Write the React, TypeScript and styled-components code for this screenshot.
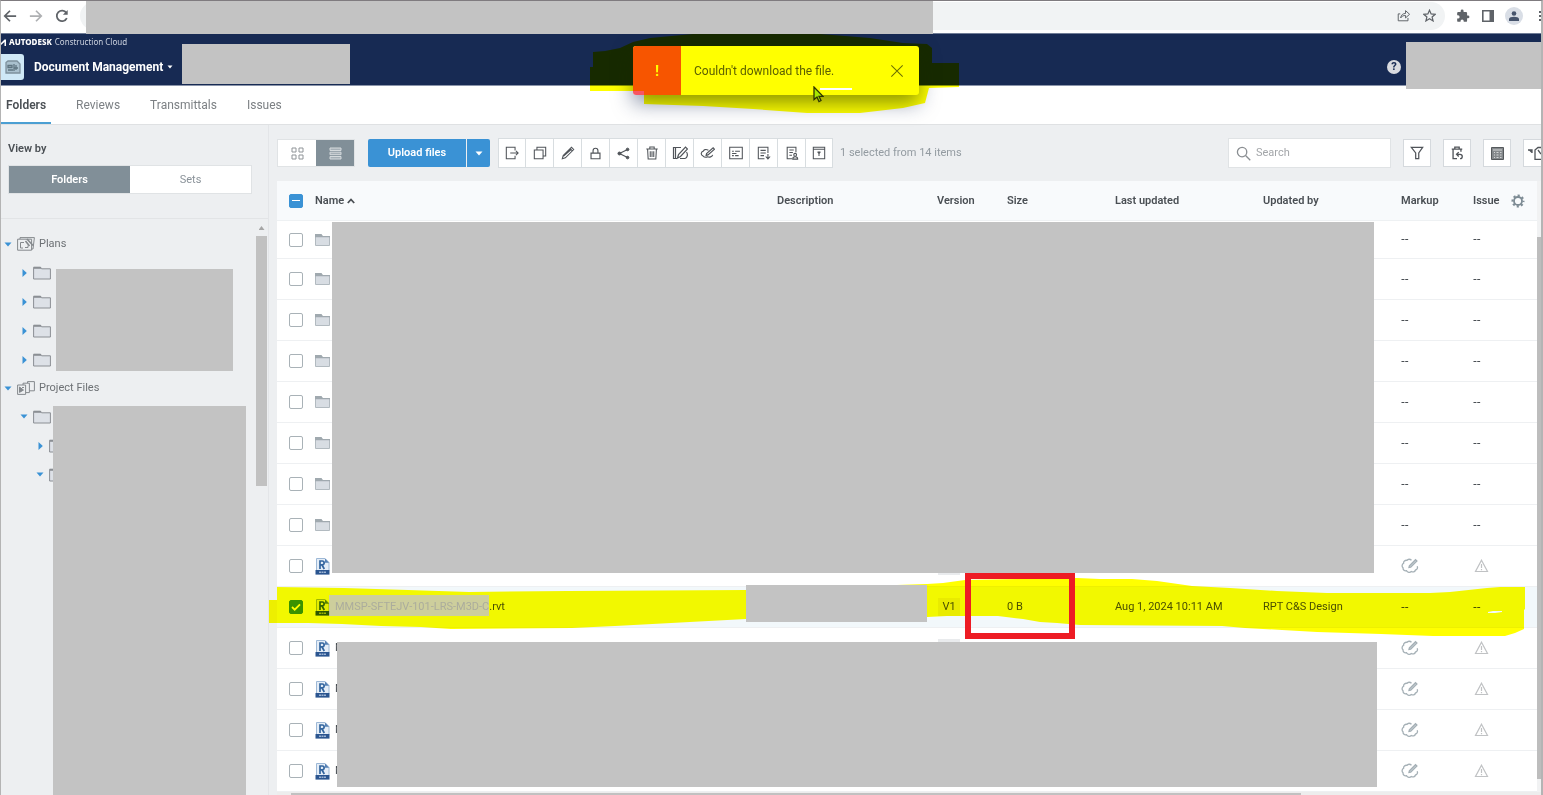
import React from "react";
import styled, { createGlobalStyle, css } from "styled-components";

const GlobalStyle = createGlobalStyle`
  *, *::before, *::after { box-sizing: border-box; }
  html, body, #root { height: 100%; }
  body {
    margin: 0;
    font-family: Roboto, "Noto Sans", sans-serif;
    font-size: 11px;
    line-height: 16px;
    color: #4a4f54;
    background: #fff;
    overflow: hidden;
  }
  button, input { font: inherit; color: inherit; margin: 0; }
  button { padding: 0; border: 0; background: none; }
  svg { display: block; flex: none; }
`;

const Page = styled.div`
  display: flex;
  flex-direction: column;
  height: 100vh;
  overflow: hidden;
  position: relative;
  border-top: 1px solid #7f7b7f;
  border-left: 1px solid #b4b4b4;
  border-right: 2px solid #b4b4b4;
`;

/* Grey block that hides private data */
const Redaction = styled.div<{
  $top: number;
  $left?: number;
  $right?: number;
  $width?: number;
  $height?: number;
  $bottom?: number;
  $veil?: boolean;
}>`
  position: absolute;
  top: ${(p) => p.$top}px;
  ${(p) => p.$left !== undefined && css`left: ${p.$left}px;`}
  ${(p) => p.$right !== undefined && css`right: ${p.$right}px;`}
  ${(p) => p.$width !== undefined && css`width: ${p.$width}px;`}
  ${(p) => p.$height !== undefined && css`height: ${p.$height}px;`}
  ${(p) => p.$bottom !== undefined && css`bottom: ${p.$bottom}px;`}
  background: ${(p) => (p.$veil ? "rgba(195, 195, 195, 0.8)" : "#c3c3c3")};
`;

/* Browser bar */
const BrowserBar = styled.div`
  display: flex;
  align-items: center;
  flex: none;
  height: 33px;
  padding: 0 0 3px 1px;
  gap: 10px;
  border-bottom: 1px solid #6f7c96;
  color: #5f6368;
  background: #fff;
`;

const BarButton = styled.button<{ $dim?: boolean }>`
  display: flex;
  align-items: center;
  justify-content: center;
  width: 16px;
  height: 28px;
  opacity: ${(p) => (p.$dim ? 0.5 : 1)};
`;

const AddressBar = styled.div`
  display: flex;
  flex: 1;
  align-items: center;
  justify-content: flex-end;
  gap: 10px;
  height: 28px;
  padding-right: 8px;
  border-radius: 14px;
  background: #f1f3f4;
`;

const BarTools = styled.div`
  display: flex;
  align-items: center;
  gap: 9px;
  margin-right: -7px;
`;

const Avatar = styled.button`
  display: flex;
  align-items: center;
  justify-content: center;
  width: 18px;
  height: 18px;
  border-radius: 9px;
  background: #d9dee6;
  color: #46546c;
`;

/* Product header */
const Header = styled.header`
  flex: none;
  height: 52px;
  background: #172a53;
  border-bottom: 1px solid #8a94aa;
  color: #fff;
`;

const Brand = styled.div`
  display: flex;
  align-items: center;
  height: 16px;
  gap: 3px;
  font-family: "Noto Sans", sans-serif;
  font-size: 8px;
  line-height: 16px;
  color: #ccd2de;
  b { color: #fff; font-weight: 800; }
`;

const ProductRow = styled.div`
  display: flex;
  align-items: center;
  height: 34px;
`;

const ProductIcon = styled.div`
  display: flex;
  align-items: center;
  justify-content: center;
  width: 23px;
  height: 26px;
  border-radius: 0 3px 3px 0;
  background: #cfe8f6;
`;

const ProductButton = styled.button`
  display: flex;
  align-items: center;
  gap: 4px;
  margin-left: 10px;
  font-size: 12px;
  font-weight: 700;
  color: #fff;
`;

const HelpButton = styled.button`
  display: flex;
  align-items: center;
  justify-content: center;
  width: 14px;
  height: 14px;
  margin-left: auto;
  margin-right: 140px;
  border-radius: 7px;
  background: #d9dbe0;
  color: #172a53;
  font-size: 11px;
  line-height: 14px;
  font-weight: 800;
`;

const TabBar = styled.nav`
  display: flex;
  flex: none;
  height: 39px;
  background: #fff;
  border-bottom: 1px solid #dfe1e3;
`;

const Tab = styled.a<{ $active?: boolean }>`
  display: flex;
  align-items: center;
  height: 38px;
  padding: 0 5px;
  margin-right: 20px;
  font-size: 12px;
  text-decoration: none;
  color: #7c8084;
  ${(p) =>
    p.$active &&
    css`
      color: #4a4f54;
      font-weight: 600;
      border-bottom: 2px solid #4b9fd3;
      padding-top: 2px;
    `}
`;

const Body = styled.div`
  display: flex;
  flex: 1;
  min-height: 0;
  background: #edeff1;
`;

/* Sidebar */
const Sidebar = styled.aside`
  position: relative;
  flex: none;
  display: flex;
  flex-direction: column;
  width: 268px;
  border-right: 1px solid #e3e5e8;
`;

const ViewBy = styled.div`
  height: 94px;
  padding: 16px 16px 0 7px;
  border-bottom: 1px solid #e2e4e6;
`;

const ViewLabel = styled.div`
  margin-bottom: 8px;
  font-weight: 600;
`;

const Segmented = styled.div`
  display: flex;
  height: 29px;
  border: 1px solid #e0e3e5;
`;

const Segment = styled.button<{ $active?: boolean }>`
  flex: 1;
  background: ${(p) => (p.$active ? "#818f98" : "#fff")};
  color: ${(p) => (p.$active ? "#fff" : "#8a9299")};
  font-weight: ${(p) => (p.$active ? 600 : 400)};
`;

const TreeArea = styled.div`
  display: flex;
  flex: 1;
  min-height: 0;
`;

const Tree = styled.ul`
  flex: 1;
  margin: 0;
  padding: 11px 0 0;
  list-style: none;
`;

const TreeRow = styled.li<{ $level: number }>`
  display: flex;
  align-items: center;
  gap: 4px;
  height: ${(p) => (p.$level === 0 ? 28 : 29)}px;
  padding-left: ${(p) => 2 + p.$level * 16}px;
  color: #6d7175;
`;

const Caret = styled.button`
  display: flex;
  align-items: center;
  justify-content: center;
  width: 10px;
  height: 16px;
`;

const VerticalScroll = styled.div`
  width: 13px;
  padding: 7px 1px 0;
`;

const ScrollArrow = styled.div`
  width: 6px;
  height: 4px;
  margin: 0 auto 6px;
  background: #a5a5a5;
  clip-path: polygon(50% 0, 100% 100%, 0 100%);
`;

const ScrollThumb = styled.div`
  height: 250px;
  background: #c1c1c1;
`;

/* Main area */
const Main = styled.main`
  flex: 1;
  min-width: 0;
  display: flex;
  flex-direction: column;
  padding-left: 8px;
`;

const Toolbar = styled.div`
  display: flex;
  flex: none;
  align-items: center;
  height: 56px;
`;

const Toggle = styled.div`
  display: flex;
  height: 28px;
  border: 1px solid #e0e3e5;
`;

const ToggleButton = styled.button<{ $active?: boolean }>`
  display: flex;
  align-items: center;
  justify-content: center;
  width: 38px;
  background: ${(p) => (p.$active ? "#818f98" : "#fff")};
`;

const UploadGroup = styled.div`
  display: flex;
  gap: 1px;
  height: 28px;
  margin-left: 13px;
`;

const UploadButton = styled.button<{ $narrow?: boolean }>`
  display: flex;
  align-items: center;
  justify-content: center;
  width: ${(p) => (p.$narrow ? 23 : 98)}px;
  border-radius: ${(p) => (p.$narrow ? "0 2px 2px 0" : "2px 0 0 2px")};
  background: #3a92d5;
  color: #fff;
  font-weight: 600;
`;

const ActionGroup = styled.div`
  display: flex;
  margin-left: 8px;
  height: 30px;
  border: 1px solid #d8dde0;
`;

const ActionButton = styled.button`
  display: flex;
  align-items: center;
  justify-content: center;
  width: 28px;
  background: #fff;
  color: #505459;
  & + & { border-left: 1px solid #d8dde0; }
  &:last-child { width: 27px; }
  &:first-child { width: 26px; }
`;

const SelectionNote = styled.span`
  margin-left: 7px;
  color: #939ba1;
`;

const SearchBox = styled.label`
  display: flex;
  align-items: center;
  gap: 5px;
  width: 163px;
  height: 30px;
  margin-left: auto;
  padding-left: 7px;
  border: 1px solid #e0e3e5;
  background: #fff;
  color: #8a8e92;
  input {
    width: 120px;
    border: 0;
    padding: 0;
    background: none;
    outline: none;
  }
  input::placeholder { color: #a3a6a9; opacity: 1; }
`;

const SquareTools = styled.div`
  display: flex;
  gap: 12px;
  margin-left: 12px;
  margin-right: -10px;
`;

const SquareButton = styled.button`
  display: flex;
  align-items: center;
  justify-content: center;
  width: 28px;
  height: 28px;
  border: 1px solid #d5d9dd;
  background: #fff;
  color: #505459;
`;

const TablePanel = styled.section`
  position: relative;
  flex: 1;
  min-height: 0;
`;

const TableFrame = styled.div`
  display: flex;
  background: #fff;
`;

const Table = styled.table`
  flex: 1;
  width: 100%;
  table-layout: fixed;
  border-collapse: separate;
  border-spacing: 0;
  th, td { padding: 0; text-align: left; white-space: nowrap; }
  th {
    height: 40px;
    background: #f8fafc;
    border-bottom: 1px solid #eef1f3;
    font-weight: 600;
  }
`;

const Row = styled.tr<{ $selected?: boolean; $first?: boolean }>`
  td {
    height: ${(p) => (p.$first ? 38 : 41)}px;
    border-bottom: 1px solid #eef0f2;
    background: ${(p) => (p.$selected ? "#f2f8fb" : "#fff")};
  }
`;

const CheckCell = styled.td`
  && { padding-left: 12px; }
`;

const CheckHead = styled.th`
  && { padding-left: 12px; }
`;

const Check = styled.input<{ $mixed?: boolean }>`
  appearance: none;
  display: block;
  width: 14px;
  height: 14px;
  border: 1px solid #a9b2b7;
  border-radius: 2px;
  background: #fff center / 100% 100% no-repeat;
  ${(p) =>
    p.$mixed &&
    css`
      border-color: #3a92d5;
      background: linear-gradient(#fff, #fff) center / 8px 1px no-repeat #3a92d5;
    `}
  &:checked {
    border-color: #3a92d5;
    background-color: #3a92d5;
  }
`;

const CheckWrap = styled.label`
  position: relative;
  display: block;
  width: 14px;
  svg { position: absolute; left: 2px; top: 3px; }
`;

const NameContent = styled.div`
  display: flex;
  align-items: center;
  gap: 5px;
`;

/* Placeholder dashes for an empty value */
const Empty = styled.span`
  font-family: "Noto Sans", sans-serif;
  font-size: 12px;
`;

const SortButton = styled.button`
  display: flex;
  align-items: center;
  gap: 3px;
  font-weight: 600;
`;

const SettingsButton = styled.button`
  display: block;
`;

const Version = styled.span`
  display: block;
  width: 22px;
  height: 18px;
  margin-left: 1px;
  line-height: 18px;
  text-align: center;
  background: #e9ebed;
`;

const TableScroll = styled.div`
  width: 4px;
  background: #f1f2f3;
  padding-top: 56px;
  padding-bottom: 13px;
`;

const TableThumb = styled.div`
  height: 100%;
  background: #bdbdbd;
`;

const HorizontalScroll = styled.div`
  height: 12px;
  padding: 1px 240px 0 14px;
  background: #ededed;
`;

const HorizontalThumb = styled.div`
  height: 10px;
  background: #c1c1c1;
`;

const RowMarker = styled.svg`
  position: absolute;
  left: -8px;
  top: 397px;
  width: calc(100% - 8px);
  height: 60px;
  mix-blend-mode: multiply;
`;

const RedFrame = styled.div`
  position: absolute;
  top: 392px;
  right: 466px;
  width: 110px;
  height: 66px;
  border: 6px solid #ed1c24;
`;

/* Error message with its marker */
const ToastLayer = styled.div`
  position: absolute;
  top: 33px;
  left: calc(50% - 181px);
  width: 370px;
  height: 80px;
`;

const Toast = styled.div`
  display: flex;
  align-items: center;
  width: 286px;
  height: 49px;
  margin: 12px 0 0 43px;
  border-radius: 3px;
  overflow: hidden;
  background: #fff;
  box-shadow: 0 8px 20px rgba(23, 42, 83, 0.5);
`;

const ToastBadge = styled.div`
  display: flex;
  align-items: center;
  justify-content: center;
  width: 48px;
  height: 49px;
  background: #f75564;
  color: #fff;
  font-size: 15px;
  font-weight: 700;
`;

const ToastText = styled.span`
  flex: 1;
  padding-left: 13px;
  font-size: 12px;
  color: #5c6064;
`;

const ToastClose = styled.button`
  width: 14px;
  height: 14px;
  margin-right: 15px;
  color: #6c7074;
`;

const ToastMarker = styled.svg`
  position: absolute;
  left: 0;
  top: 0;
  mix-blend-mode: multiply;
`;

const Pointer = styled.svg`
  position: absolute;
  left: 223px;
  top: 52px;
`;

const stroke = (size: number, children: React.ReactNode, width = 1.2) => (
  <svg
    width={size}
    height={size}
    viewBox="0 0 16 16"
    fill="none"
    stroke="currentColor"
    strokeWidth={width}
    aria-hidden="true"
  >
    {children}
  </svg>
);

const DownTriangle = ({ color = "#3a92d5" }: { color?: string }) => (
  <svg width="8" height="5" viewBox="0 0 8 5" aria-hidden="true">
    <path d="M0.5 0.5h7L4 4.5z" fill={color} />
  </svg>
);

const RightTriangle = () => (
  <svg width="5" height="8" viewBox="0 0 5 8" aria-hidden="true">
    <path d="M0.5 0v8L4.8 4z" fill="#3a92d5" />
  </svg>
);

const TreeFolder = () => (
  <svg width="18" height="14" viewBox="0 0 18 14" aria-hidden="true">
    <path d="M.6 13V1.2h7l1 1.6h8.8V13z" fill="#dde1e7" stroke="#8b8f94" />
    <path d="M1 1h7v1.8H1z" fill="#8b8f94" />
  </svg>
);

const PlansIcon = () => (
  <svg width="18" height="14" viewBox="0 0 18 14" fill="none" stroke="#85898d" aria-hidden="true">
    <path d="M.6 2.2h14v11H.6zM3 2V.6h14.400L16 12h-1.500" />
    <path d="M3.500 9V5.500H7M3.500 8.500v2.500H6M8 10.500h3V8.500" />
    <path d="M8.500 4l4 5M10 2l6 6.500" strokeWidth="1.600" />
  </svg>
);

const ProjectIcon = () => (
  <svg width="18" height="14" viewBox="0 0 18 14" fill="none" stroke="#85898d" aria-hidden="true">
    <path d="M.6 4h8v9.4h-8zM6 4V2.2h6.4V11.6H9M10.5 2V.6h6.9v9.2h-4.8" />
    <path d="M2.5 11V6l4 3-4 2.4zM5 6.5h2" fill="#85898d" />
  </svg>
);

const RowFolder = () => (
  <svg width="15" height="12" viewBox="0 0 15 12" aria-hidden="true">
    <path d="M.5 11.500V1h6l1 1.500h7v9z" fill="#d8dde3" stroke="#b2bac0" />
    <path d="M0 0h6.500l1.200 2H15v1.200H0z" fill="#a0a9af" />
  </svg>
);

const RevitIcon = () => (
  <svg width="15" height="17" viewBox="0 0 15 17" aria-hidden="true">
    <path d="M1.500.5h8.500l4 4v8h-12.500z" fill="#e4edf7" stroke="#9db8d6" />
    <path d="M10 .5l4.200 4.200H10z" fill="#5580b4" />
    <path
      d="M5 11V3h2.200a1.900 1.900 0 0 1 0 3.900H5.500M7 7l2.300 4"
      fill="none"
      stroke="#33659f"
      strokeWidth="1.700"
    />
    <path d="M.5 12h14v4.600H.5z" fill="#2a5590" />
    <path d="M4 14.300h7" stroke="#9db4d3" strokeWidth="1.400" strokeDasharray="2 .5" />
  </svg>
);

const MarkupIcon = () => (
  <svg width="18" height="16" viewBox="0 0 18 16" fill="none" stroke="#a5b0b6" strokeWidth="1.3" aria-hidden="true">
    <path d="M10.5 2.2C9 .8 6.800 1 6 2.300 4 2 2.300 3.500 2.600 5.300.8 6.300.6 8.600 2 9.800 1.800 11.800 3.600 13.200 5.400 12.700 6.500 14.600 9 14.900 10.300 13.500c1.600 1 3.700.3 4.200-1.500 1.700-.4 2.500-2.200 1.700-3.800" />
    <path d="M8 9.500l.4-1.700L14.500 1.700l1.400 1.400L9.700 9.100z" fill="#c8d0d5" />
  </svg>
);

const IssueIcon = () => (
  <svg width="16" height="14" viewBox="0 0 16 14" fill="none" stroke="#c0c2c4" strokeWidth="1.200" aria-hidden="true">
    <path d="M8.500 1.200l6 11.300H2.500z" />
    <path d="M8.500 5v4M8.500 10v1.300" />
  </svg>
);

const Gear = () => (
  <svg width="14" height="14" viewBox="0 0 14 14" fill="none" stroke="#7d8b94" aria-hidden="true">
    <circle cx="7" cy="7" r="4" strokeWidth="1.800" />
    <circle cx="7" cy="7" r="5.500" strokeWidth="2" strokeDasharray="2.160 2.160" strokeDashoffset="1.080" />
  </svg>
);

const actions: { label: string; icon: React.ReactNode }[] = [
  { label: "Move", icon: stroke(14, <path d="M11.500 5V1.500h-10v13h10V11M6 8h9M12.500 5.500L15 8l-2.500 2.500" />) },
  { label: "Copy", icon: stroke(14, <path d="M1.500 4.500h10v10h-10zM4.500 4.500v-3h10v10h-3" />) },
  { label: "Rename", icon: stroke(14, <path d="M1.500 14.500l1-3.500L12 1.500l2.500 2.500L5 13.500zM10.500 3l2.500 2.500M3 11.500L11.500 4" />) },
  { label: "Permissions", icon: stroke(13, <path d="M2.500 7.500h11v7h-11zM5 7.500V4.500a3 3 0 0 1 6 0v3" />, 1.4) },
  {
    label: "Share",
    icon: stroke(
      13,
      <>
        <path d="M13 3L3 8l10 5" strokeWidth="1.500" />
        <circle cx="13" cy="3" r="1.600" fill="currentColor" />
        <circle cx="3" cy="8" r="1.800" fill="currentColor" />
        <circle cx="13" cy="13" r="1.600" fill="currentColor" />
      </>
    ),
  },
  { label: "Delete", icon: stroke(14, <path d="M1.500 3.500h13M5.500 3V1.200h5V3M3 4l.6 10.800h8.800L13 4M6 6v6.500M8 6v6.500M10 6v6.500" />) },
  { label: "Edit drawing", icon: stroke(16, <path d="M9 2.500H1.500v11H5M3.500 2.500v11M5.500 13l1-3.500 7-7.500 2 2-7 7.500zM14.500 7c1.500 2 1 6-1.500 6.500H8" />) },
  { label: "Markup", icon: stroke(15, <path d="M9 4.500C6 3 4 4 3.500 5.500 1 6 .5 9.500 3 10.500c2 2 4 1.500 5 1 2 1 5 0 5.500-2M6.500 10l.5-2L14 2l1.500 1.500L8.500 9.500z" />) },
  { label: "Attributes", icon: stroke(14, <path d="M.8 1.500h14.400v13H.8zM3.500 6h2M7 6h5.500M3.500 8.500h5M3.500 11h2M7 11h4" />) },
  { label: "Export", icon: stroke(14, <path d="M12.500 8V1.500h-11v13h7M4 5h6M4 8h6M4 11h4M12.500 9v5.500M10 12l2.500 2.700L15 12" />) },
  {
    label: "Review",
    icon: stroke(
      14,
      <>
        <path d="M12.500 7V1.500h-10v13H8M5 4.500h5M5 7.500h4M5 10.500h3M8.800 15c0-3.500 5.700-3.500 5.700 0z" />
        <circle cx="11.600" cy="10" r="1.600" />
      </>
    ),
  },
  { label: "Transmit", icon: stroke(14, <><path d="M1.500 1.500h13v13h-13zM1.500 3.800h13M8 6v5.500" /><path d="M5.500 6.500h5L8 9z" fill="currentColor" stroke="none" /></>) },
];

const tree: { level: number; open?: boolean; icon: React.ReactNode; label?: string }[] = [
  { level: 0, open: true, icon: <PlansIcon />, label: "Plans" },
  { level: 1, icon: <TreeFolder /> },
  { level: 1, icon: <TreeFolder /> },
  { level: 1, icon: <TreeFolder /> },
  { level: 1, icon: <TreeFolder /> },
  { level: 0, open: true, icon: <ProjectIcon />, label: "Project Files" },
  { level: 1, open: true, icon: <TreeFolder /> },
  { level: 2, icon: <TreeFolder /> },
  { level: 2, open: true, icon: <TreeFolder /> },
];

type Item = { kind: "folder" | "file"; selected?: boolean; name?: string };

const items: Item[] = [
  ...Array.from({ length: 8 }, (): Item => ({ kind: "folder" })),
  { kind: "file" },
  { kind: "file", selected: true, name: "MMSP-SFTEJV-101-LRS-M3D-C.rvt" },
  ...Array.from({ length: 4 }, (): Item => ({ kind: "file", name: "M" })),
];

export default function App() {
  return (
    <Page>
      <GlobalStyle />
      <BrowserBar>
        <BarButton aria-label="Back">{stroke(14, <path d="M15 8H2M8 2L2 8l6 6" />, 2)}</BarButton>
        <BarButton aria-label="Forward" $dim>{stroke(14, <path d="M1 8h13M8 2l6 6-6 6" />, 2)}</BarButton>
        <BarButton aria-label="Reload">
          {stroke(14, <><path d="M13.500 10.500A6 6 0 1 1 13 4.500" /><path d="M14.500 1v5.500H9z" fill="currentColor" stroke="none" /></>, 2)}
        </BarButton>
        <AddressBar>
          <BarButton aria-label="Share page">{stroke(13, <path d="M4 6H1.500v8.500h12V11M4.500 11c.5-4 3-5.500 6-5.500V2l5 4.500-5 4.500V8C8 8 6 8.500 4.500 11z" />)}</BarButton>
          <BarButton aria-label="Bookmark">{stroke(13, <path d="M8 1.500l2 4.600 5 .4-3.800 3.300 1.200 4.900L8 12.100l-4.400 2.600 1.200-4.900L1 6.500l5-.4z" />, 1.5)}</BarButton>
        </AddressBar>
        <BarTools>
          <BarButton aria-label="Extensions">
            <svg width="14" height="14" viewBox="0 0 24 24" fill="currentColor">
              <path d="M20.500 11H19V7a2 2 0 0 0-2-2h-4V3.500a2.500 2.500 0 0 0-5 0V5H4a2 2 0 0 0-2 2v3.800h1.500a2.700 2.700 0 0 1 0 5.400H2V20a2 2 0 0 0 2 2h3.800v-1.500a2.700 2.700 0 0 1 5.400 0V22H17a2 2 0 0 0 2-2v-4h1.500a2.500 2.500 0 0 0 0-5z" />
            </svg>
          </BarButton>
          <BarButton aria-label="Side panel">
            <svg width="12" height="12" viewBox="0 0 12 12">
              <path d="M.8.8h10.400v10.400H.8z" fill="none" stroke="currentColor" strokeWidth="1.600" />
              <path d="M7.500 1H11v10H7.500z" fill="currentColor" />
            </svg>
          </BarButton>
          <Avatar aria-label="Profile">
            <svg width="10" height="10" viewBox="0 0 10 10" fill="currentColor">
              <circle cx="5" cy="2.500" r="2.300" />
              <path d="M0 10V8c0-3 10-3 10 0v2z" />
            </svg>
          </Avatar>
          <BarButton aria-label="Menu">
            <svg width="4" height="14" viewBox="0 0 4 14" fill="currentColor">
              <path d="M1 2h2v2H1zM1 6h2v2H1zM1 10h2v2H1z" />
            </svg>
          </BarButton>
        </BarTools>
      </BrowserBar>

      <Header>
        <Brand>
          <svg width="5" height="7" viewBox="0 0 5 7" aria-hidden="true">
            <path d="M0 4L3.500 0.500H5V7H3.500V3L0 6z" fill="#fff" />
          </svg>
          <b>AUTODESK</b>
          <span>Construction Cloud</span>
        </Brand>
        <ProductRow>
          <ProductIcon>
            <svg width="16" height="14" viewBox="0 0 16 14" fill="none" stroke="#7d909c" strokeWidth="1.300" aria-hidden="true">
              <path d="M1 2.500L3 1h9l3 3v9H1z" fill="#a9c0cd" />
              <path d="M3 5.500h4v2H3zM3 10h5M9 4v7M9 8h4M11 5v5" stroke="#5f7480" />
            </svg>
          </ProductIcon>
          <ProductButton>
            Document Management
            <svg width="6" height="4" viewBox="0 0 6 4" aria-hidden="true"><path d="M0.500 .5h5L3 3.500z" fill="#fff" /></svg>
          </ProductButton>
          <HelpButton aria-label="Help">?</HelpButton>
        </ProductRow>
      </Header>

      <TabBar>
        <Tab href="#folders" $active>Folders</Tab>
        <Tab href="#reviews">Reviews</Tab>
        <Tab href="#transmittals">Transmittals</Tab>
        <Tab href="#issues">Issues</Tab>
      </TabBar>

      <Body>
        <Sidebar>
          <ViewBy>
            <ViewLabel>View by</ViewLabel>
            <Segmented>
              <Segment $active>Folders</Segment>
              <Segment>Sets</Segment>
            </Segmented>
          </ViewBy>
          <TreeArea>
            <Tree>
              {tree.map((node, i) => (
                <TreeRow key={i} $level={node.level}>
                  <Caret aria-label={node.open ? "Collapse" : "Expand"}>
                    {node.open ? <DownTriangle /> : <RightTriangle />}
                  </Caret>
                  {node.icon}
                  {node.label}
                </TreeRow>
              ))}
            </Tree>
            <VerticalScroll>
              <ScrollArrow />
              <ScrollThumb />
            </VerticalScroll>
          </TreeArea>
          <Redaction $top={144} $left={55} $width={177} $height={102} />
          <Redaction $top={281} $left={52} $width={193} $bottom={0} />
        </Sidebar>

        <Main>
          <Toolbar>
            <Toggle>
              <ToggleButton aria-label="Grid view">
                <svg width="13" height="13" viewBox="0 0 13 13" fill="none" stroke="#8f9498" aria-hidden="true">
                  <path d="M1 1h4v4H1zM8 1h4v4H8zM1 8h4v4H1zM8 8h4v4H8z" />
                </svg>
              </ToggleButton>
              <ToggleButton aria-label="List view" $active>
                <svg width="13" height="13" viewBox="0 0 13 13" fill="#a6b0b7" stroke="#d5dadd" aria-hidden="true">
                  <path d="M1 1h11v2.500H1zM1 5.200h11v2.500H1zM1 9.500h11V12H1z" />
                </svg>
              </ToggleButton>
            </Toggle>
            <UploadGroup>
              <UploadButton>Upload files</UploadButton>
              <UploadButton $narrow aria-label="More upload options"><DownTriangle color="#fff" /></UploadButton>
            </UploadGroup>
            <ActionGroup>
              {actions.map((a) => (
                <ActionButton key={a.label} aria-label={a.label}>{a.icon}</ActionButton>
              ))}
            </ActionGroup>
            <SelectionNote>1 selected from 14 items</SelectionNote>
            <SearchBox>
              {stroke(15, <><circle cx="6.500" cy="6.500" r="5" /><path d="M10.200 10.200l5 5" /></>, 1.4)}
              <input type="text" placeholder="Search" aria-label="Search" />
            </SearchBox>
            <SquareTools>
              <SquareButton aria-label="Filter">{stroke(14, <path d="M1.500 1.500h13L10 8v6.500H6.500V8z" />, 1.4)}</SquareButton>
              <SquareButton aria-label="Deleted items">
                {stroke(14, <path d="M2 3.500h12M5.500 3V1.200h5V3M8 14.500H3.500V4M12.500 4v2.500M7.500 9.500h4a2.500 2.500 0 0 1 0 5M10 7L7.500 9.500 10 12" />, 1.5)}
              </SquareButton>
              <SquareButton aria-label="Columns">
                <svg width="13" height="13" viewBox="0 0 13 13" aria-hidden="true">
                  <path d="M.5.5h12v12H.5z" fill="#85898c" stroke="#55595c" />
                  <path d="M2 3h9M3 5.500h1M3 8h1M3 10.500h1M5.500 5.500h2M5.500 8h2M5.500 10.500h2M9 5.500h1.500M9 8h1.500M9 10.500h1.500" stroke="#d3d5d6" />
                </svg>
              </SquareButton>
              <SquareButton aria-label="Export log">
                <svg width="22" height="14" viewBox="0 0 22 14" fill="none" stroke="currentColor" strokeWidth="1.300" aria-hidden="true">
                  <path d="M2 4h4v3M3.500 4L6 6.500M9 4l3-2.500h8v12H9zM12 4l3 4" />
                </svg>
              </SquareButton>
            </SquareTools>
          </Toolbar>

          <TablePanel>
            <TableFrame>
              <Table>
                <colgroup>
                  <col style={{ width: 38 }} />
                  <col />
                  <col style={{ width: 160 }} />
                  <col style={{ width: 70 }} />
                  <col style={{ width: 108 }} />
                  <col style={{ width: 148 }} />
                  <col style={{ width: 138 }} />
                  <col style={{ width: 72 }} />
                  <col style={{ width: 38 }} />
                  <col style={{ width: 26 }} />
                </colgroup>
                <thead>
                  <tr>
                    <CheckHead><Check type="checkbox" $mixed aria-label="Select all" /></CheckHead>
                    <th>
                      <SortButton>
                        Name
                        <svg width="8" height="6" viewBox="0 0 8 6" fill="none" stroke="#4a4f54" strokeWidth="1.800" aria-hidden="true">
                          <path d="M.8 5L4 1.500 7.200 5" />
                        </svg>
                      </SortButton>
                    </th>
                    <th>Description</th>
                    <th>Version</th>
                    <th>Size</th>
                    <th>Last updated</th>
                    <th>Updated by</th>
                    <th>Markup</th>
                    <th>Issue</th>
                    <th><SettingsButton aria-label="Table settings"><Gear /></SettingsButton></th>
                  </tr>
                </thead>
                <tbody>
                  {items.map((item, i) => {
                    const file = item.kind === "file";
                    const marks = file && !item.selected;
                    return (
                      <Row key={i} $selected={item.selected} $first={i === 0}>
                        <CheckCell>
                          <CheckWrap>
                            <Check type="checkbox" defaultChecked={item.selected} aria-label={`Select row ${i + 1}`} />
                            {item.selected && (
                              <svg width="10" height="8" viewBox="0 0 10 8" fill="none" stroke="#fff" strokeWidth="1.800" aria-hidden="true">
                                <path d="M1 4l2.700 2.700L9 1.300" />
                              </svg>
                            )}
                          </CheckWrap>
                        </CheckCell>
                        <td>
                          <NameContent>
                            {file ? <RevitIcon /> : <RowFolder />}
                            {item.name}
                          </NameContent>
                        </td>
                        <td />
                        <td>{file && <Version>V1</Version>}</td>
                        <td>{item.selected && "0 B"}</td>
                        <td>{item.selected && "Aug 1, 2024 10:11 AM"}</td>
                        <td>{item.selected && "RPT C&S Design"}</td>
                        <td>{marks ? <MarkupIcon /> : <Empty>--</Empty>}</td>
                        <td>{marks ? <IssueIcon /> : <Empty>--</Empty>}</td>
                        <td />
                      </Row>
                    );
                  })}
                </tbody>
              </Table>
              <TableScroll><TableThumb /></TableScroll>
            </TableFrame>
            <HorizontalScroll><HorizontalThumb /></HorizontalScroll>

            <RowMarker viewBox="269 578 1256 60" preserveAspectRatio="none" aria-hidden="true">
              <path
                fillRule="evenodd"
                fill="#ffff00"
                d="M277 587L344 588 408 590 469 592 568 591 746 590 927 584 943 583 965 580 1077 578 1100 579 1132 579 1157 581 1192 586 1230 588 1277 591 1327 593 1430 593 1450 592 1487 588 1500 587 1525 587 1525 609 1524 610 1524 629 1515 633 1505 636 1433 636 1381 634 1317 632 1282 630 1245 628 1222 626 1080 625 1057 623 1040 622 1023 619 998 616 947 616 927 617 746 619 615 626 572 628 451 629 421 627 381 626 342 624 308 623 269 623 269 600 277 600zM1488 612L1493 611h9v1l-7 1h-7z"
              />
            </RowMarker>
            <Redaction $top={41} $left={55} $right={167} $height={351} />
            <Redaction $top={461} $left={60} $right={164} $height={145} />
            <Redaction $top={404} $right={614} $width={181} $height={37} />
            <Redaction $top={414} $left={52} $width={160} $height={21} $veil />
            <RedFrame />
          </TablePanel>
        </Main>
      </Body>

      <ToastLayer>
        <Toast role="alert">
          <ToastBadge>!</ToastBadge>
          <ToastText>Couldn't download the file.</ToastText>
          <ToastClose aria-label="Dismiss">
            {stroke(14, <path d="M1.500 1.500l13 13M14.500 1.500l-13 13" />)}
          </ToastClose>
        </Toast>
        <Pointer width="11" height="17" viewBox="0 0 11 17" aria-hidden="true">
          <path d="M1 1v12.500l3-2.500 2 4.500 2-1-2-4.200h4z" fill="#a8e8a0" stroke="#30353a" strokeWidth="1.300" />
        </Pointer>
        <ToastMarker width="370" height="80" viewBox="590 34 370 80" aria-hidden="true">
          <path
            fillRule="evenodd"
            fill="#ffff00"
            d="M590 67L593 67 593 52 605 51 620 48 633 42 650 38 693 34 820 34 870 38 903 43 927 44 932 48 932 63 959 63 959 87 929 88 925 103 903 108 860 113 807 113 753 109 703 106 644 104 644 91 590 91zM820 88h32v2h-32z"
          />
        </ToastMarker>
      </ToastLayer>

      <Redaction $top={-1} $left={85} $width={847} $height={34} />
      <Redaction $top={43} $left={181} $width={168} $height={40} />
      <Redaction $top={41} $right={0} $width={135} $height={47} />
    </Page>
  );
}
